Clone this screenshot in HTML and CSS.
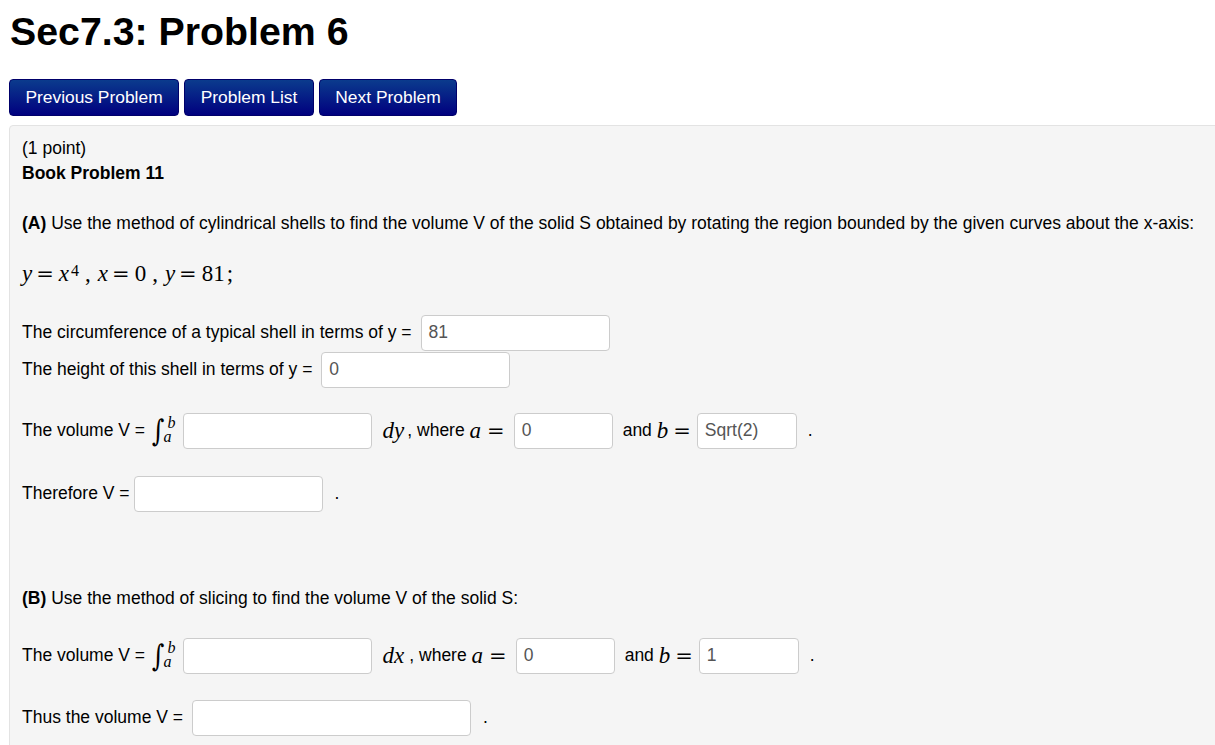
FILE: index.html
```html
<!DOCTYPE html>
<html>
<head>
<meta charset="utf-8">
<link rel="stylesheet" href="styles.css">
</head>
<body>
<div class="page">
  <h1 class="title">Sec7.3: Problem 6</h1>
  <div class="nav">
    <a class="btn">Previous Problem</a>
    <a class="btn">Problem List</a>
    <a class="btn">Next Problem</a>
  </div>
  <div class="panel">
    <div class="line">(1 point)</div>
    <div class="line"><b>Book Problem 11</b></div>
    <div class="line gap"><b>(A)</b> Use the method of cylindrical shells to find the volume V of the solid S obtained by rotating the region bounded by the given curves about the x-axis:</div>
    <div class="line gap math-line"><span class="mi">y</span><span class="mo">=</span><span class="mi">x</span><sup class="msup">4</sup><span class="mp">,</span><span class="mi">x</span><span class="mo">=</span><span class="mn">0</span><span class="mp">,</span><span class="mi">y</span><span class="mo">=</span><span class="mn">81</span><span class="mn semi">;</span></div>

    <div class="row r-circ">The circumference of a typical shell in terms of y =<span class="field w189 ml9">81</span></div>
    <div class="row">The height of this shell in terms of y =<span class="field w189 ml9">0</span></div>

    <div class="row r-vol">The volume V =<span class="integral"><span class="intsign">∫</span><span class="lims"><span class="lim-b">b</span><span class="lim-a">a</span></span></span><span class="field w189"></span><span class="dvar"><i>dy</i></span><span class="comma">,</span>&nbsp;where&nbsp;<i class="mv">a</i><span class="eq">=</span><span class="field w99">0</span><span class="gap-and">and&nbsp;<i class="mv">b</i><span class="eq eqb">=</span></span><span class="field w100">Sqrt(2)</span><span class="dot">.</span></div>
    <div class="row r-there">Therefore V =<span class="field w189 ml4"></span><span class="dot d2">.</span></div>

    <div class="line r-b"><b>(B)</b> Use the method of slicing to find the volume V of the solid S:</div>

    <div class="row r-volb">The volume V =<span class="integral"><span class="intsign">∫</span><span class="lims"><span class="lim-b">b</span><span class="lim-a">a</span></span></span><span class="field w189"></span><span class="dvar dx"><i>dx</i></span><span class="comma">,</span>&nbsp;where&nbsp;<i class="mv">a</i><span class="eq">=</span><span class="field w99">0</span><span class="gap-and">and&nbsp;<i class="mv">b</i><span class="eq eqb">=</span></span><span class="field w100">1</span><span class="dot">.</span></div>
    <div class="row r-thus">Thus the volume V =<span class="field w279 ml9"></span><span class="dot d2">.</span></div>
  </div>
</div>
</body>
</html>
```

FILE: styles.css
```css
html, body {
  margin: 0;
  padding: 0;
  overflow: hidden;
  background: #ffffff;
}
body {
  font-family: "Liberation Sans", Arial, sans-serif;
  color: #000;
  font-size: 17.5px;
}
.page {
  padding-left: 9px;
}
.title {
  margin: 0;
  padding: 9px 0 0 1px;
  font-size: 39.3px;
  line-height: 44px;
  font-weight: bold;
  color: #000;
}
.nav {
  display: flex;
  gap: 5px;
  margin-top: 26px;
}
.btn {
  display: inline-flex;
  align-items: center;
  justify-content: center;
  height: 37px;
  box-sizing: border-box;
  padding: 0 12px;
  border-radius: 4px;
  color: #fff;
  font-size: 17.4px;
  background: linear-gradient(#0b3b8d, #00007f);
  border: 1px solid #00006a;
}
.btn:nth-child(1) { width: 170px; }
.btn:nth-child(2) { width: 130px; }
.btn:nth-child(3) { width: 138px; }
.panel {
  margin-top: 9px;
  width: 1260px;
  min-height: 700px;
  background: #f5f5f5;
  border: 1px solid #e3e3e3;
  border-radius: 4px;
  padding: 10px 12px;
  box-sizing: border-box;
}
.line {
  line-height: 25px;
  white-space: nowrap;
}
.gap {
  margin-top: 25px;
}
.math-line {
  font-family: "Liberation Serif", "Times New Roman", serif;
  font-size: 23px;
  display: flex;
  align-items: baseline;
}
.mi { font-style: italic; }
.mo {
  font-family: "DejaVu Serif", serif;
  font-size: 21px;
  margin: 0 5px 0 4px;
}
.msup { font-size: 16px; position: relative; top: -5px; margin-left: 2px; }
.mp { margin: 0 7px 0 6px; }
.mn.semi { margin-left: 2px; }
.row {
  height: 37px;
  display: flex;
  align-items: center;
  white-space: nowrap;
}
.r-circ { margin-top: 26px; }
.r-vol { margin-top: 24px; }
.r-there { margin-top: 26px; }
.r-b { margin-top: 74px; }
.r-volb { margin-top: 26px; }
.r-thus { margin-top: 25px; }
.field {
  display: inline-flex;
  align-items: center;
  height: 36px;
  box-sizing: border-box;
  background: #fff;
  border: 1px solid #cccccc;
  border-radius: 4px;
  padding: 0 7px;
  color: #555555;
  font-size: 17.5px;
}
.w189 { width: 189px; }
.w99 { width: 99px; }
.w100 { width: 100px; }
.w279 { width: 279px; }
.ml9 { margin-left: 9px; }
.ml4 { margin-left: 4px; }
.integral {
  display: inline-flex;
  align-items: center;
  margin-left: 7px;
  margin-right: 7px;
  font-family: "Liberation Serif", "Times New Roman", serif;
  height: 36px;
}
.intsign {
  font-family: "DejaVu Serif", serif;
  font-size: 24px;
  line-height: 1;
  transform: scaleY(1.25);
}
.lims {
  display: inline-flex;
  flex-direction: column;
  font-style: italic;
  font-size: 16px;
  line-height: 14px;
  margin-top: -2px;
}
.lim-b { margin-left: 3px; }
.lim-a { margin-left: -1px; }
.dvar {
  font-family: "Liberation Serif", "Times New Roman", serif;
  font-size: 23px;
  margin-left: 11px;
}
.dvar.dx { margin-right: 2px; }
.comma { margin-left: 3px; }
.mv {
  font-family: "Liberation Serif", "Times New Roman", serif;
  font-size: 23px;
}
.eq {
  font-family: "DejaVu Serif", serif;
  font-size: 21px;
  margin: 0 9px 0 6px;
}
.eq.eqb { margin: 0 6px 0 5px; }
.gap-and { margin-left: 10px; display: inline-flex; align-items: center; }
.dot { margin-left: 11px; }
.dot.d2 { margin-left: 12px; }
```
